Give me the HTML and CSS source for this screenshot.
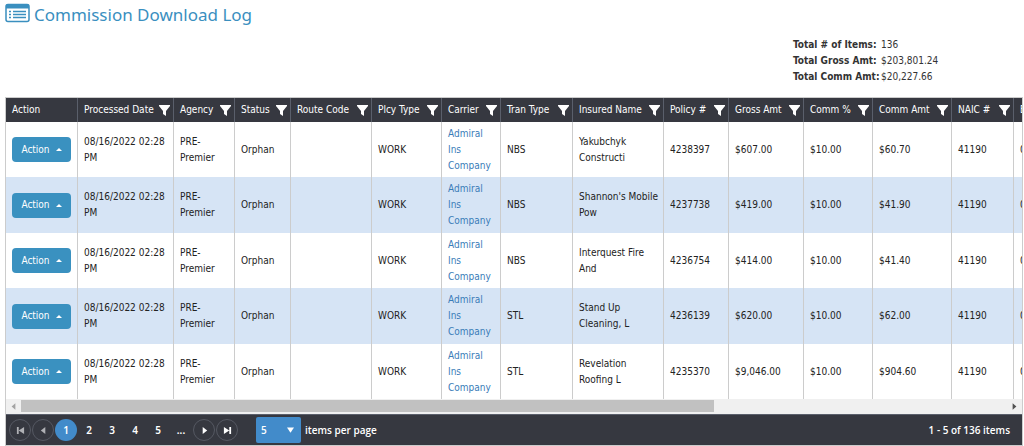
FILE: index.html
```
<!DOCTYPE html>
<html lang="en">
<head>
<meta charset="utf-8">
<title>Commission Download Log</title>
<link rel="stylesheet" href="styles.css">
<script src="app.js" defer></script>
</head>
<body>
<header class="page-head">
  <svg class="page-icon" viewBox="0 0 25 19" aria-hidden="true">
    <rect x="1" y="1" width="23" height="17" rx="2" fill="#fff" stroke="#3a8fbf" stroke-width="1.500"/>
    <path d="M1 1h23v4H1z" fill="#3a8fbf"/>
    <path d="M4 8h2M4 11h2M4 14h2M8 8h13M8 11h13M8 14h13" stroke="#3a8fbf" stroke-width="1.500"/>
  </svg>
  <h1 class="page-title">Commission Download Log</h1>
</header>
<dl class="totals">
  <dt>Total # of Items:</dt><dd>136</dd>
  <dt>Total Gross Amt:</dt><dd>$203,801.24</dd>
  <dt>Total Comm Amt:</dt><dd>$20,227.66</dd>
</dl>
<main class="grid">
  <div class="grid-view">
    <table class="log">
      <colgroup>
        <col class="c-action"><col class="c-date"><col class="c-agency"><col class="c-status"><col class="c-route"><col class="c-plcy"><col class="c-carrier"><col class="c-tran"><col class="c-insured"><col class="c-policy"><col class="c-gross"><col class="c-pct"><col class="c-comm"><col class="c-naic"><col class="c-last">
      </colgroup>
      <thead><tr class="log-head"></tr></thead>
      <tbody class="log-body"></tbody>
    </table>
  </div>
  <div class="scrollbar" aria-hidden="true">
    <svg class="scroll-arrow is-off" viewBox="0 0 16 15"><path d="M10 4v7L6 7.500z"/></svg>
    <div class="scroll-track"><div class="scroll-thumb"></div></div>
    <svg class="scroll-arrow" viewBox="0 0 16 15"><path d="M6 4v7l4-3.500z"/></svg>
  </div>
  <footer class="pager">
    <nav class="pages" aria-label="Pages">
      <button class="nav-btn is-off" type="button" aria-label="First page" disabled><svg viewBox="0 0 10 10"><path d="M1 1h2v8H1zM9 1v8L3 5z"/></svg></button>
      <button class="nav-btn is-off" type="button" aria-label="Previous page" disabled><svg viewBox="0 0 10 10"><path d="M7 1v8L2 5z"/></svg></button>
      <a class="page is-current" href="#1" aria-current="page">1</a>
      <a class="page" href="#2">2</a>
      <a class="page" href="#3">3</a>
      <a class="page" href="#4">4</a>
      <a class="page" href="#5">5</a>
      <a class="page" href="#6">...</a>
      <button class="nav-btn" type="button" aria-label="Next page"><svg viewBox="0 0 10 10"><path d="M3 1v8l5-4z"/></svg></button>
      <button class="nav-btn" type="button" aria-label="Last page"><svg viewBox="0 0 10 10"><path d="M7 1h2v8H7zM1 1v8l6-4z"/></svg></button>
    </nav>
    <label class="size">
      <span class="size-box">
        <select class="size-select"><option>5</option><option>10</option><option>20</option></select>
        <svg class="size-arrow" viewBox="0 0 8 6" aria-hidden="true"><path d="M0 0h8L4 6z"/></svg>
      </span>
      items per page
    </label>
    <span class="range">1 - 5 of 136 items</span>
  </footer>
</main>
</body>
</html>
```
FILE: styles.css
```
* { box-sizing: border-box; }
body {
  margin: 0;
  padding: 3px 1px 0 5px;
  background: #fff;
  color: #222;
  font: 10px/16px "DejaVu Sans Condensed", Tahoma, "Noto Sans", sans-serif;
}
button, select { font: inherit; }
.page-head { display: flex; align-items: flex-start; gap: 4px; height: 24px; }
.page-icon { width: 25px; height: 20px; }
.page-title { margin: 0; color: #3a8fbf; font: 17px/24px "Noto Sans", sans-serif; }
.totals {
  display: grid;
  grid-template-columns: 88px 142px;
  justify-content: end;
  margin: 10px 0 12px;
  color: #333;
}
.totals dt { font-weight: bold; white-space: nowrap; }
.totals dd { margin: 0; }
.grid { border: 1px solid #ccc; }
.grid-view { overflow: hidden; }
.log { width: 1100px; table-layout: fixed; border-collapse: separate; border-spacing: 0; }
.c-action { width: 72px; }
.c-date { width: 96px; }
.c-agency { width: 61px; }
.c-status { width: 56px; }
.c-route { width: 81px; }
.c-plcy { width: 70px; }
.c-carrier { width: 59px; }
.c-tran { width: 72px; }
.c-insured { width: 91px; }
.c-policy { width: 65px; }
.c-gross { width: 75px; }
.c-pct { width: 69px; }
.c-comm { width: 79px; }
.c-naic { width: 62px; }
.log th {
  height: 24px;
  padding: 0 3px 0 6px;
  border-right: 1px solid #5a5f6b;
  background: #363840;
  color: #fff;
  font-weight: normal;
  text-align: left;
  white-space: nowrap;
}
.th-inner { display: flex; align-items: center; justify-content: space-between; }
.filter { display: flex; padding: 0; border: 0; background: none; }
.filter svg { width: 11px; height: 11px; fill: #fff; }
.log td { height: 55px; padding: 0 4px 0 6px; border-right: 1px solid #ccc; vertical-align: middle; }
.log tr:nth-child(even) td { height: 56px; background: #d6e4f5; }
.log td a { display: block; width: 42px; color: #3a7cb8; text-decoration: none; }
.action-btn {
  display: flex;
  align-items: center;
  justify-content: center;
  gap: 6px;
  width: 59px;
  height: 25px;
  padding: 0;
  border: 0;
  border-radius: 4px;
  background: #3a91c0;
  color: #fff;
}
.action-btn svg { width: 6px; height: 3px; fill: #fff; }
.scrollbar { display: flex; height: 15px; background: #f0f0f0; }
.scroll-arrow { flex: none; width: 15px; height: 15px; fill: #505050; }
.scroll-arrow.is-off { fill: #a3a3a3; }
.scroll-track { flex: 1; padding: 1px 0; }
.scroll-thumb { width: 70.3%; height: 12px; background: #c1c1c1; }
.pager {
  display: flex;
  align-items: center;
  height: 31px;
  padding: 0 12px 0 3px;
  border-top: 1px solid #5a5f6b;
  background: #363840;
  color: #fff;
  font-family: "Noto Sans", sans-serif;
  font-weight: 600;
}
.pages { display: flex; align-items: center; gap: 1px; }
.nav-btn { display: grid; place-items: center; width: 22px; height: 22px; padding: 0; border: 1px solid #555862; border-radius: 50%; background: none; }
.nav-btn svg { width: 9px; height: 9px; fill: #fff; }
.nav-btn.is-off svg { fill: #b0b1b5; }
.page { width: 22px; border-radius: 50%; color: #fff; line-height: 22px; text-align: center; text-decoration: none; }
.page.is-current { background: #428bca; }
.size { display: flex; align-items: center; gap: 4px; margin-left: 18px; font-family: "Open Sans", sans-serif; }
.size-box { display: grid; align-items: center; width: 45px; height: 26px; }
.size-select { grid-area: 1 / 1; width: 100%; height: 26px; padding: 0 5px; border: 0; border-radius: 2px; background: #428bca; color: #fff; appearance: none; }
.size-arrow { grid-area: 1 / 1; justify-self: end; width: 7px; height: 6px; margin-right: 7px; fill: #fff; pointer-events: none; }
.range { margin-left: auto; font-family: "Open Sans", sans-serif; }
```
FILE: app.js
```
const heads = ["Action", "Processed Date", "Agency", "Status", "Route Code", "Plcy Type", "Carrier", "Tran Type", "Insured Name", "Policy #", "Gross Amt", "Comm %", "Comm Amt", "NAIC #", "E"];
const rows = [
  ["NBS", "Yakubchyk Constructi", "4238397", "$607.00", "$60.70"],
  ["NBS", "Shannon's Mobile Pow", "4237738", "$419.00", "$41.90"],
  ["NBS", "Interquest Fire And", "4236754", "$414.00", "$41.40"],
  ["STL", "Stand Up Cleaning, L", "4236139", "$620.00", "$62.00"],
  ["STL", "Revelation Roofing L", "4235370", "$9,046.00", "$904.60"]
];
const funnel = '<svg viewBox="0 0 11 11" aria-hidden="true"><path d="M0 0h11v1L7 6v5L4 9V6L0 1z"/></svg>';
document.querySelector(".log-head").innerHTML = heads.map((name, i) =>
  `<th scope="col"><div class="th-inner"><span>${name}</span>${i ? `<button class="filter" type="button" aria-label="Filter ${name}">${funnel}</button>` : ""}</div></th>`
).join("");
document.querySelector(".log-body").innerHTML = rows.map(([tran, insured, policy, gross, comm]) => {
  const cells = [
    '<button class="action-btn" type="button">Action <svg viewBox="0 0 6 3" aria-hidden="true"><path d="M0 3h6L3 0z"/></svg></button>',
    "08/16/2022 02:28 PM", "PRE-<br>Premier", "Orphan", "", "WORK",
    '<a href="#carrier">Admiral Ins Company</a>',
    tran, insured, policy, gross, "$10.00", comm, "41190", "0"
  ];
  return `<tr>${cells.map(cell => `<td>${cell}</td>`).join("")}</tr>`;
}).join("");
```
